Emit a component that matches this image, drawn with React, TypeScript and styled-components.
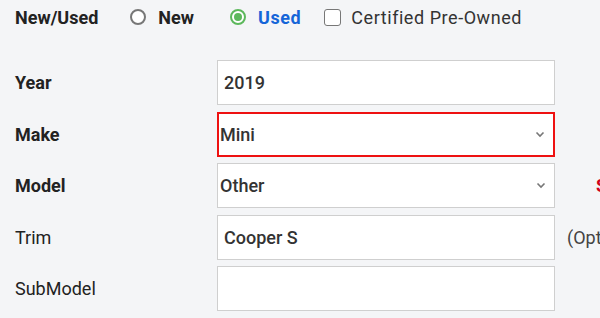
import styled, { createGlobalStyle } from "styled-components";

const GlobalStyle = createGlobalStyle`
	html, body {
		margin: 0;
		padding: 0;
		background: #f4f5f7;
	}
	body {
		font-family: Roboto, "Liberation Sans", sans-serif;
		color: #222;
	}
`;

const Page = styled.div`
	width: 600px;
	height: 318px;
	overflow: hidden;
	padding-left: 15px;
	box-sizing: border-box;
	display: flex;
	flex-direction: column;
`;

const TopRow = styled.div`
	height: 34px;
	display: flex;
	flex-direction: row;
	align-items: center;
	margin-bottom: 26px;
	font-size: 18px;
	white-space: nowrap;
`;

const GroupTitle = styled.span`
	font-weight: 700;
	color: #222;
	margin-right: 32px;
`;

const Option = styled.label<{ $after?: number; $inner?: number }>`
	display: flex;
	align-items: center;
	gap: ${(p) => p.$inner ?? 12}px;
	margin-right: ${(p) => p.$after ?? 0}px;
`;

const RadioText = styled.span<{ $active?: boolean }>`
	font-weight: 700;
	letter-spacing: ${(p) => (p.$active ? 0.6 : 0)}px;
	color: ${(p) => (p.$active ? "#1565d8" : "#222")};
`;

const Radio = styled.span<{ $checked?: boolean }>`
	width: 16px;
	height: 16px;
	box-sizing: border-box;
	border-radius: 50%;
	border: 2px solid ${(p) => (p.$checked ? "#5cb85c" : "#777")};
	background: #fff;
	display: flex;
	align-items: center;
	justify-content: center;
	&::after {
		content: "";
		width: 8px;
		height: 8px;
		border-radius: 50%;
		background: ${(p) => (p.$checked ? "#5cb85c" : "transparent")};
	}
`;

const Checkbox = styled.span`
	width: 17px;
	height: 17px;
	box-sizing: border-box;
	border: 1.5px solid #777;
	border-radius: 3px;
	background: #fff;
`;

const CheckText = styled.span`
	color: #333;
	letter-spacing: 0.55px;
`;

const FormGrid = styled.div`
	display: grid;
	grid-template-columns: 202px 338px 1fr;
	grid-auto-rows: 45px;
	row-gap: 6.5px;
	align-items: center;
`;

const Label = styled.span<{ $bold?: boolean }>`
	font-size: 18px;
	font-weight: ${(p) => (p.$bold ? 700 : 400)};
	color: #222;
`;

const Field = styled.div<{ $error?: boolean; $select?: boolean }>`
	height: 45px;
	box-sizing: border-box;
	background: #fff;
	border: ${(p) => (p.$error ? "2px solid #ee1111" : "1.5px solid #cfcfcf")};
	display: flex;
	align-items: center;
	justify-content: space-between;
	padding: ${(p) => (p.$select ? (p.$error ? "0 8px 0 1px" : "0 8px 0 2px") : "0 8px 0 6px")};
	font-size: 18px;
	font-weight: 500;
	color: #333;
`;

const Note = styled.span<{ $red?: boolean }>`
	padding-left: ${(p) => (p.$red ? 41 : 12)}px;
	font-size: 18px;
	white-space: nowrap;
	color: ${(p) => (p.$red ? "#d0021b" : "#444")};
	font-weight: ${(p) => (p.$red ? 700 : 400)};
`;

const Chevron = () => (
	<svg width="10" height="7" viewBox="0 0 10 7">
		<path d="M1.5 1.5 L5 5 L8.5 1.5" fill="none" stroke="#777" strokeWidth="1.6" />
	</svg>
);

interface Row {
	label: string
	bold?: boolean
	value: string
	select?: boolean
	error?: boolean
	note?: string
	noteRed?: boolean
}

const rows: Row[] = [
	{ label: "Year", bold: true, value: "2019" },
	{ label: "Make", bold: true, value: "Mini", select: true, error: true },
	{ label: "Model", bold: true, value: "Other", select: true, note: "Select", noteRed: true },
	{ label: "Trim", value: "Cooper S", note: "(Optional)" },
	{ label: "SubModel", value: "" },
];

const App = () => {
	return (
		<>
			<GlobalStyle />
			<Page>
				<TopRow>
					<GroupTitle>New/Used</GroupTitle>
					<Option $after={36}>
						<Radio />
						<RadioText>New</RadioText>
					</Option>
					<Option $after={23}>
						<Radio $checked />
						<RadioText $active>Used</RadioText>
					</Option>
					<Option $inner={10}>
						<Checkbox />
						<CheckText>Certified Pre-Owned</CheckText>
					</Option>
				</TopRow>
				<FormGrid>
					{rows.map((r) => (
						<>
							<Label key={r.label + "l"} $bold={r.bold}>{r.label}</Label>
							<Field key={r.label + "f"} $select={r.select} $error={r.error}>
								<span>{r.value}</span>
								{r.select && <Chevron />}
							</Field>
							<Note key={r.label + "n"} $red={r.noteRed}>{r.note}</Note>
						</>
					))}
				</FormGrid>
			</Page>
		</>
	);
}

export default App
